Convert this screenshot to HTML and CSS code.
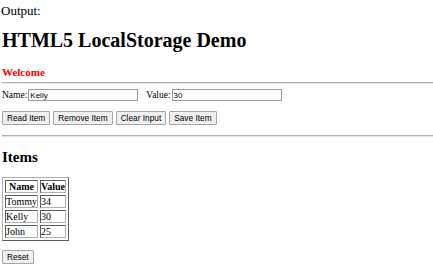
FILE: index.html
```html
<!DOCTYPE html>
<html>
<head>
<meta charset="utf-8">
<link rel="stylesheet" href="styles.css">
</head>
<body>
<div class="output">Output:</div>
<h1 class="title">HTML5 LocalStorage Demo</h1>
<h3 class="welcome">Welcome</h3>
<hr class="rule">
<div class="fields">
  <label class="field">Name:<input class="text" type="text" value="Kelly"></label>
  <label class="field">Value:<input class="text" type="text" value="30"></label>
</div>
<div class="actions">
  <button class="btn">Read Item</button>
  <button class="btn">Remove Item</button>
  <button class="btn">Clear Input</button>
  <button class="btn">Save Item</button>
</div>
<hr class="rule rule-bottom">
<h2 class="items-title">Items</h2>
<table class="items" border="1">
  <tr><th>Name</th><th>Value</th></tr>
  <tr><td>Tommy</td><td>34</td></tr>
  <tr><td>Kelly</td><td>30</td></tr>
  <tr><td>John</td><td>25</td></tr>
</table>
<div class="reset-row"><button class="btn">Reset</button></div>
</body>
</html>
```
FILE: styles.css
```css
html, body {
  background: #ffffff;
}
body {
  margin: 0;
  padding: 3px 0 0 1px;
  font-family: "Liberation Serif", "Times New Roman", serif;
  font-size: 10px;
  color: #000;
}
.output {
  font-size: 13px;
  line-height: 15px;
}
.title {
  font-size: 20px;
  font-weight: bold;
  margin: 11px 0 0 1px;
  line-height: 22px;
}
.welcome {
  color: #ff0000;
  font-size: 11px;
  font-weight: bold;
  line-height: 13px;
  margin: 15px 0 3px 1px;
}
.rule {
  border: 0;
  border-top: 1px solid #b4b4b4;
  border-bottom: 1px solid #e6e6e6;
  height: 0;
  margin: 0 0 5px 1px;
}
.rule-bottom {
  margin-top: 10px;
  margin-bottom: 0;
}
.fields {
  display: flex;
  gap: 8px;
  align-items: center;
  height: 12px;
  margin-left: 1px;
}
.field {
  display: flex;
  align-items: center;
  font-size: 9.5px;
}
.text {
  box-sizing: border-box;
  width: 110px;
  height: 12px;
  font-family: "Liberation Sans", Arial, sans-serif;
  font-size: 8px;
  border: 1px solid #9a9a9a;
  padding: 0 1px;
  margin: 0 0 0 1px;
}
.actions {
  display: flex;
  gap: 3px;
  margin: 10px 0 0 1px;
}
.btn {
  box-sizing: border-box;
  font-family: "Liberation Sans", Arial, sans-serif;
  font-size: 8.3px;
  padding: 0 4px;
  background: #efefef;
  border: 1px solid #a6a6a6;
  border-radius: 1px;
  color: #000;
  height: 14px;
  line-height: 12px;
}
.items-title {
  font-size: 15px;
  font-weight: bold;
  line-height: 17px;
  margin: 12px 0 0 1px;
}
.items {
  font-size: 10px;
  border: 1px outset #b0b0b0;
  border-spacing: 2px;
  margin: 11px 0 0 1px;
}
.items th, .items td {
  border: 1px inset #b0b0b0;
  padding: 0;
  line-height: 11px;
  text-align: left;
}
.items th {
  text-align: center;
}
.reset-row {
  margin: 9px 0 0 1px;
}
```
